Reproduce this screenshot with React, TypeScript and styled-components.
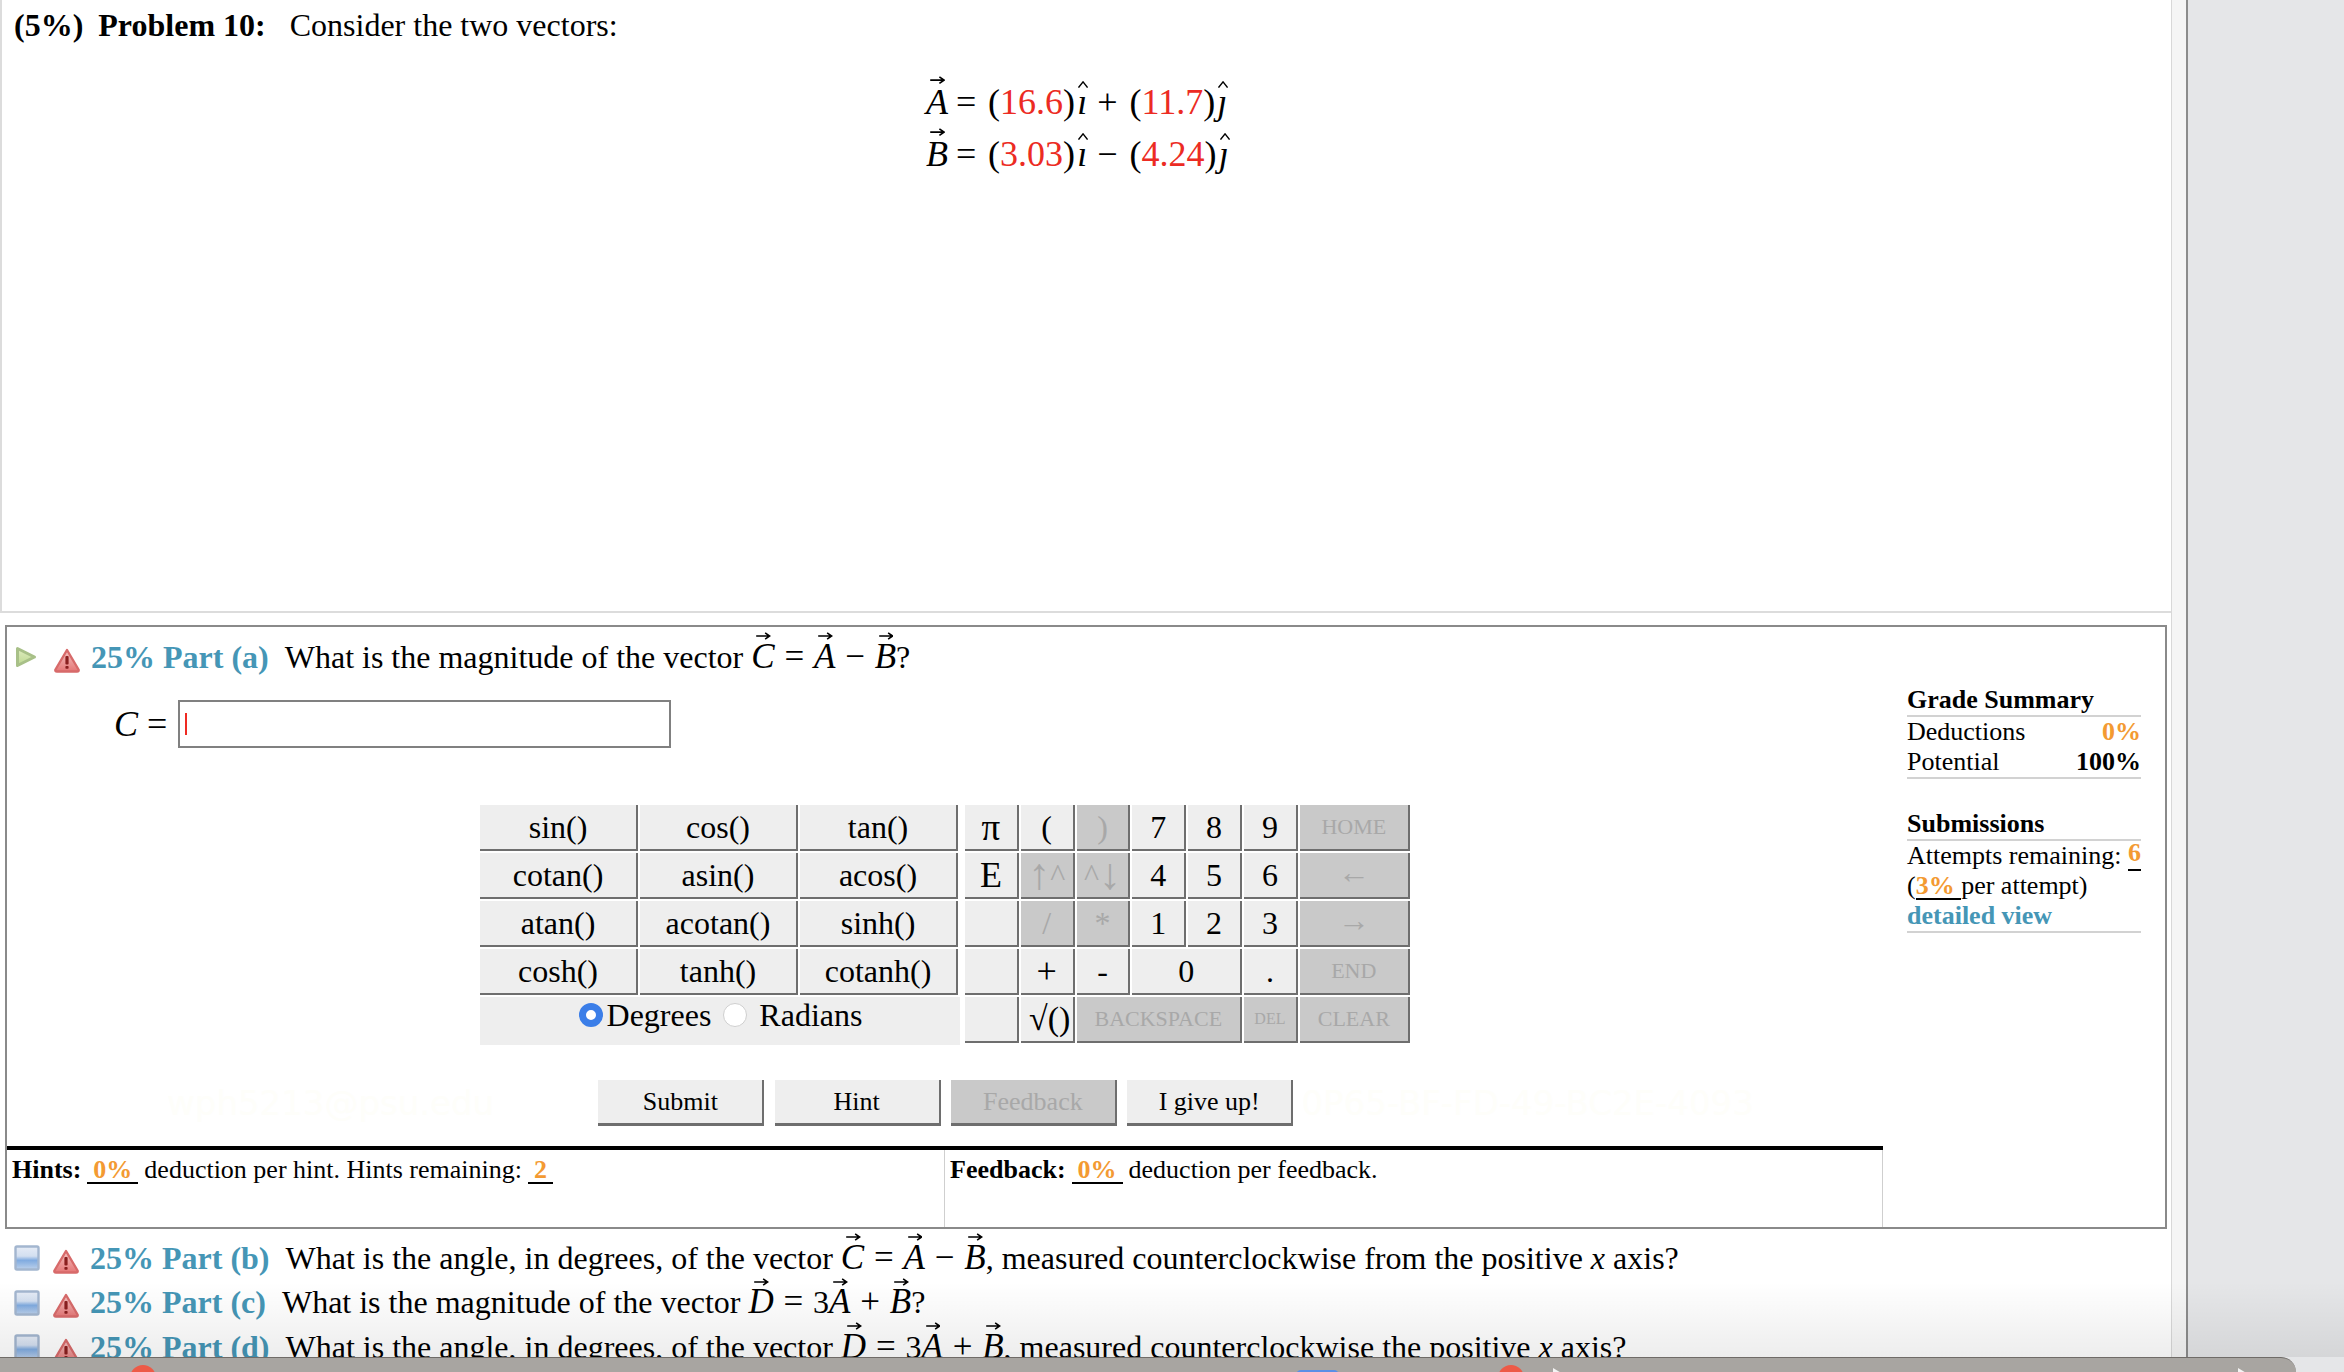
import { FC, ReactNode } from "react";
import styled, { createGlobalStyle } from "styled-components";

const BLUE = "#4596b6";
const ORANGE = "#f39a32";
const SERIF = '"Liberation Serif", "Times New Roman", serif';

const GlobalStyle = createGlobalStyle`
  html, body {
    margin: 0;
    padding: 0;
    background: #fff;
  }
  body {
    font-family: ${SERIF};
    color: #000;
  }
  * {
    box-sizing: border-box;
  }
`;

const BigArrow = styled.span`
  font-size: 44px;
  line-height: 1;
`;

const SideArrow = styled.span`
  margin-bottom: 6px;
`;

const SqrtLabel = styled.span`
  margin-left: 6px;
`;

const FUNCTION_ROWS = [
  ["sin()", "cos()", "tan()"],
  ["cotan()", "asin()", "acos()"],
  ["atan()", "acotan()", "sinh()"],
  ["cosh()", "tanh()", "cotanh()"],
];

interface Key {
  label: ReactNode;
  off?: boolean;
  span?: number;
  size?: number;
}

const KEY_ROWS: Key[][] = [
  [
    { label: "π", size: 37 },
    { label: "(" },
    { label: ")", off: true },
    { label: "7" },
    { label: "8" },
    { label: "9" },
    { label: "HOME", off: true, size: 22 },
  ],
  [
    { label: "E", size: 36 },
    { label: <><BigArrow>↑</BigArrow>^</>, off: true },
    { label: <>^<BigArrow>↓</BigArrow></>, off: true },
    { label: "4" },
    { label: "5" },
    { label: "6" },
    { label: <SideArrow>←</SideArrow>, off: true, size: 32 },
  ],
  [
    { label: "" },
    { label: "/", off: true },
    { label: "*", off: true },
    { label: "1" },
    { label: "2" },
    { label: "3" },
    { label: <SideArrow>→</SideArrow>, off: true, size: 32 },
  ],
  [
    { label: "" },
    { label: "+", size: 36 },
    { label: "-" },
    { label: "0", span: 2 },
    { label: "." },
    { label: "END", off: true, size: 22 },
  ],
  [
    { label: "" },
    { label: <SqrtLabel>√()</SqrtLabel>, size: 34 },
    { label: "BACKSPACE", off: true, span: 3, size: 22 },
    { label: "DEL", off: true, size: 16 },
    { label: "CLEAR", off: true, size: 22 },
  ],
];

const PlayIcon = () => (
  <svg width="22" height="22" viewBox="0 0 22 22">
    <defs>
      <linearGradient id="playFill" x1="0" y1="0" x2="0" y2="1">
        <stop offset="0" stopColor="#dfecc0" />
        <stop offset="1" stopColor="#bcd890" />
      </linearGradient>
    </defs>
    <path d="M2.5 2.5 L19.5 11 L2.5 19.5 Z" fill="url(#playFill)" stroke="#a8c088" strokeWidth="3" strokeLinejoin="round" />
  </svg>
);

const WarnIcon = () => (
  <svg width="26" height="25" viewBox="0 0 26 25">
    <defs>
      <linearGradient id="warnFill" x1="0" y1="0" x2="0" y2="1">
        <stop offset="0" stopColor="#f3c4c2" />
        <stop offset="1" stopColor="#e57676" />
      </linearGradient>
    </defs>
    <path d="M13 2 L24.5 21.5 Q25.2 23.5 23 23.5 L3 23.5 Q0.8 23.5 1.5 21.5 Z" fill="url(#warnFill)" stroke="#d76a6a" strokeWidth="2.4" strokeLinejoin="round" />
    <rect x="11.4" y="8" width="3.2" height="8.5" rx="1" fill="#8a1f1f" />
    <rect x="11.4" y="18" width="3.2" height="2.8" rx="0.8" fill="#8a1f1f" />
  </svg>
);

const BoxIcon = () => (
  <svg width="26" height="26" viewBox="0 0 26 26">
    <defs>
      <linearGradient id="boxFill" x1="0" y1="0" x2="0" y2="1">
        <stop offset="0" stopColor="#e6ecf6" />
        <stop offset="0.42" stopColor="#d3dff0" />
        <stop offset="0.6" stopColor="#80abe0" />
        <stop offset="1" stopColor="#bdd1eb" />
      </linearGradient>
    </defs>
    <rect x="1.5" y="1.5" width="23" height="23" rx="1.5" fill="url(#boxFill)" stroke="#a3b6cf" strokeWidth="2.4" />
  </svg>
);

// Letter with a small arrow sitting above it
const Vec: FC<{ children: ReactNode }> = ({ children }) => (
  <VecWrap>
    <VecArrow viewBox="0 0 16 9">
      <path d="M0 4.5 H14 M10 1 L15 4.5 L10 8" fill="none" stroke="#000" strokeWidth="1.8" />
    </VecArrow>
    <i>{children}</i>
  </VecWrap>
);

const Hat: FC<{ children: ReactNode }> = ({ children }) => (
  <HatWrap>
    <HatMark viewBox="0 0 10 7">
      <path d="M0.5 6.5 L5 0.8 L9.5 6.5" fill="none" stroke="#000" strokeWidth="1.4" />
    </HatMark>
    <i>{children}</i>
  </HatWrap>
);

const PartRow: FC<{ letter: string; children: ReactNode; icon?: ReactNode }> = ({
  letter,
  children,
  icon,
}) => (
  <PartLine>
    <IconSlot>{icon ?? <BoxIcon />}</IconSlot>
    <WarnSlot>
      <WarnIcon />
    </WarnSlot>
    <PartLabel>25% Part ({letter})</PartLabel>
    <PartText>{children}</PartText>
  </PartLine>
);

const App = () => (
  <>
    <GlobalStyle />
    <Page>
      <Main>
        <ProblemBox>
          <Heading>
            <b>(5%)</b>
            <b>Problem 10:</b>
            <Intro>Consider the two vectors:</Intro>
          </Heading>
          <Equations>
            <Equation>
              <Vec>A</Vec>
              <Op>=</Op>(<Given>16.6</Given>)<Hat>ı</Hat>
              <Op>+</Op>(<Given>11.7</Given>)<Hat>ȷ</Hat>
            </Equation>
            <Equation>
              <Vec>B</Vec>
              <Op>=</Op>(<Given>3.03</Given>)<Hat>ı</Hat>
              <Op>−</Op>(<Given>4.24</Given>)<Hat>ȷ</Hat>
            </Equation>
          </Equations>
        </ProblemBox>

        <PartBox>
          <PartHead>
            <PartRow letter="a" icon={<PlayIcon />}>
              What is the magnitude of the vector <Vec>C</Vec>
              <Op>=</Op>
              <Vec>A</Vec>
              <Op>−</Op>
              <Vec>B</Vec>?
            </PartRow>
          </PartHead>

          <PartBody>
            <WorkArea>
              <AnswerRow>
                <AnswerLabel>
                  <i>C</i> =
                </AnswerLabel>
                <AnswerBox>
                  <Caret />
                </AnswerBox>
              </AnswerRow>

              <Calculator>
                <FunctionPad>
                  <FunctionGrid>
                    {FUNCTION_ROWS.flat().map((label) => (
                      <PadKey key={label}>{label}</PadKey>
                    ))}
                  </FunctionGrid>
                  <AngleRow>
                    <RadioOn />
                    <span>Degrees</span>
                    <RadioOff />
                    <span>Radians</span>
                  </AngleRow>
                </FunctionPad>

                <NumberGrid>
                  {KEY_ROWS.flat().map((k, i) => (
                    <PadKey key={i} $off={k.off} $span={k.span} $size={k.size}>
                      {k.label}
                    </PadKey>
                  ))}
                </NumberGrid>
              </Calculator>

              <ActionRow>
                <Watermark $left>wph5213@psu.edu</Watermark>
                <ActionButton>Submit</ActionButton>
                <ActionButton>Hint</ActionButton>
                <ActionButton $off>Feedback</ActionButton>
                <ActionButton>I give up!</ActionButton>
                <Watermark>0P65-BF-FD-49-BC2E-4093</Watermark>
              </ActionRow>
            </WorkArea>

            <SideColumn>
              <SummaryBlock>
                <SummaryTitle>Grade Summary</SummaryTitle>
                <SummaryRow>
                  <span>Deductions</span>
                  <Orange>0%</Orange>
                </SummaryRow>
                <SummaryRow>
                  <span>Potential</span>
                  <b>100%</b>
                </SummaryRow>
              </SummaryBlock>
              <SummaryBlock>
                <SummaryTitle>Submissions</SummaryTitle>
                <SummaryRow>
                  <span>Attempts remaining:</span>
                  <Underlined>
                    <Orange>6</Orange>
                  </Underlined>
                </SummaryRow>
                <SummaryLine>
                  (
                  <Underlined>
                    <Orange>3%</Orange>&nbsp;
                  </Underlined>
                  per attempt)
                </SummaryLine>
                <DetailLink>detailed view</DetailLink>
              </SummaryBlock>
            </SideColumn>
          </PartBody>

          <HintStrip>
            <HintCell>
              <b>Hints:</b>
              <Underlined $wide>
                <Orange>0%</Orange>
              </Underlined>
              deduction per hint. Hints remaining:
              <Underlined $wide>
                <Orange>2</Orange>
              </Underlined>
            </HintCell>
            <HintCell $last>
              <b>Feedback:</b>
              <Underlined $wide>
                <Orange>0%</Orange>
              </Underlined>
              deduction per feedback.
            </HintCell>
          </HintStrip>
        </PartBox>

        <OtherParts>
          <PartRow letter="b">
            What is the angle, in degrees, of the vector <Vec>C</Vec>
            <Op>=</Op>
            <Vec>A</Vec>
            <Op>−</Op>
            <Vec>B</Vec>, measured counterclockwise from the positive <i>x</i> axis?
          </PartRow>
          <PartRow letter="c">
            What is the magnitude of the vector <Vec>D</Vec>
            <Op>=</Op>3<Vec>A</Vec>
            <Op>+</Op>
            <Vec>B</Vec>?
          </PartRow>
          <PartRow letter="d">
            What is the angle, in degrees, of the vector <Vec>D</Vec>
            <Op>=</Op>3<Vec>A</Vec>
            <Op>+</Op>
            <Vec>B</Vec>, measured counterclockwise the positive <i>x</i> axis?
          </PartRow>
        </OtherParts>
      </Main>
      <Gutter />
      <DockShade />
      <Dock>
        <DockDot $left={130} $color="#ed5a47" />
        <DockDot $left={1498} $color="#ed5a47" />
        <DockBlue />
        <DockMark $left={1553} />
        <DockMark $left={2238} />
      </Dock>
    </Page>
  </>
);

export default App;

const Page = styled.div`
  position: relative;
  display: flex;
  width: 2344px;
  height: 1372px;
  overflow: hidden;
  background: #fff;
`;

const Main = styled.div`
  width: 2172px;
  height: 100%;
  flex: none;
  border-right: 1px solid #d8d8d8;
`;

const Gutter = styled.div`
  flex: 1;
  background: #e5e6e8;
  border-left: 14px solid #f5f5f5;
  box-shadow: inset 2px 0 0 #8c8c8c;
`;

const ProblemBox = styled.div`
  height: 613px;
  border-left: 2px solid #dcdcdc;
  border-bottom: 2px solid #dcdcdc;
  padding: 6px 0 0 12px;
`;

const Heading = styled.div`
  display: flex;
  gap: 15px;
  font-size: 32px;
  line-height: 38px;
`;

const Intro = styled.span`
  margin-left: 9px;
`;

const Op = styled.span`
  display: inline-block;
  margin: 0 0.28em;
`;

const Equations = styled.div`
  margin: 32px 0 0 912px;
  font-size: 36px;
`;

const Equation = styled.div`
  height: 52px;
  line-height: 52px;
  white-space: nowrap;

  ${Op} {
    margin: 0 0.33em 0 0.22em;
  }
`;

const Given = styled.span`
  color: #ec2b23;
`;

const VecWrap = styled.span`
  position: relative;
  display: inline-block;
  line-height: 1.15;
`;

const VecArrow = styled.svg`
  position: absolute;
  left: 50%;
  top: -0.18em;
  width: 0.42em;
  height: 0.23em;
  margin-left: -0.19em;
`;

const HatWrap = styled.span`
  position: relative;
  display: inline-block;
  line-height: 1.15;
  margin: 0 0.06em;
`;

const HatMark = styled.svg`
  position: absolute;
  left: 50%;
  top: -0.03em;
  width: 0.28em;
  height: 0.2em;
  margin-left: -0.11em;
`;

const PartBox = styled.div`
  width: 2162px;
  height: 604px;
  margin: 12px 0 0 5px;
  border: 2px solid #8a8a8a;
  display: flex;
  flex-direction: column;
`;

const PartHead = styled.div`
  height: 58px;
  padding: 8px 0 0 8px;
`;

const PartLine = styled.div`
  display: flex;
  align-items: center;
  height: 44.5px;
  white-space: nowrap;
  font-size: 32px;
`;

const IconSlot = styled.span`
  display: flex;
  width: 39px;
  flex: none;
`;

const WarnSlot = styled.span`
  display: flex;
  width: 37px;
  flex: none;
  padding-top: 6px;
`;

const PartLabel = styled.b`
  color: ${BLUE};
  margin-right: 16px;
`;

const PartText = styled.span`
  ${VecWrap}, ${Op} {
    font-size: 35px;
    line-height: 1;
  }
`;

const PartBody = styled.div`
  display: flex;
  flex: 1;
`;

const WorkArea = styled.div`
  width: 1876px;
  flex: none;
  border-bottom: 4px solid #000;
`;

const AnswerRow = styled.div`
  display: flex;
  align-items: center;
  padding-left: 107px;
  height: 48px;
  margin-top: 15px;
`;

const AnswerLabel = styled.span`
  font-size: 36px;
  width: 64px;
`;

const AnswerBox = styled.div`
  display: flex;
  align-items: center;
  width: 493px;
  height: 48px;
  border: 2px solid #808080;
  padding-left: 5px;
`;

const Caret = styled.span`
  width: 2px;
  height: 22px;
  background: #ef2a22;
`;

const Calculator = styled.div`
  display: flex;
  gap: 5px;
  margin: 57px 0 0 473px;
`;

const FunctionPad = styled.div`
  width: 480px;
  background: #eeeeee;
`;

const FunctionGrid = styled.div`
  display: grid;
  grid-template-columns: repeat(3, 158px);
  grid-auto-rows: 46px;
  gap: 2px;
  background: #fff;
  padding-bottom: 2px;
`;

const AngleRow = styled.div`
  display: flex;
  align-items: center;
  justify-content: center;
  gap: 4px;
  height: 48px;
  padding: 0 0 12px 1px;
  font-size: 32px;
`;

const RadioOn = styled.span`
  width: 24px;
  height: 24px;
  border-radius: 50%;
  border: 7px solid #3b7ee8;
  background: #fff;
`;

const RadioOff = styled.span`
  width: 24px;
  height: 24px;
  margin: 0 8px 0 8px;
  border-radius: 50%;
  border: 1px solid #cfcfcf;
  background: #fff;
`;

const NumberGrid = styled.div`
  display: grid;
  grid-template-columns: repeat(6, 53.8px) 110px;
  grid-auto-rows: 46px;
  gap: 2px;
`;

const PadKey = styled.div<{ $off?: boolean; $span?: number; $size?: number }>`
  display: flex;
  align-items: center;
  justify-content: center;
  grid-column: span ${({ $span }) => $span ?? 1};
  background: ${({ $off }) => ($off ? "#c9c9c9" : "#eeeeee")};
  color: ${({ $off }) => ($off ? "#a8a8a8" : "#000")};
  font-size: ${({ $size }) => $size ?? 32}px;
  border-right: 2px solid #6e6e6e;
  border-bottom: 2px solid #6e6e6e;
  white-space: nowrap;
`;

const ActionRow = styled.div`
  display: flex;
  gap: 10.3px;
  margin-top: 35px;
`;

const ActionButton = styled.div<{ $off?: boolean }>`
  display: flex;
  align-items: center;
  justify-content: center;
  width: 166px;
  height: 46px;
  flex: none;
  font-size: 26px;
  background: ${({ $off }) => ($off ? "#c9c9c9" : "#eeeeee")};
  color: ${({ $off }) => ($off ? "#a8a8a8" : "#000")};
  border-right: 2px solid #6e6e6e;
  border-bottom: 3px solid #6e6e6e;
`;

// near-white text that runs beside the buttons
const Watermark = styled.div<{ $left?: boolean }>`
  width: ${({ $left }) => ($left ? "581px" : "auto")};
  padding-left: ${({ $left }) => ($left ? "160px" : "0")};
  margin-left: ${({ $left }) => ($left ? "0" : "-2px")};
  flex: none;
  font-family: "DejaVu Sans", sans-serif;
  font-size: 34px;
  line-height: 46px;
  color: #fefefa;
  white-space: nowrap;
`;

const SideColumn = styled.div`
  width: 234px;
  margin-left: 24px;
  font-size: 26px;
`;

const SummaryBlock = styled.div`
  margin-bottom: 30px;
  border-bottom: 2px solid #d2d2d2;
`;

const SummaryTitle = styled.div`
  font-weight: bold;
  line-height: 30px;
  border-bottom: 2px solid #d2d2d2;
`;

const SummaryRow = styled.div`
  display: flex;
  justify-content: space-between;
  line-height: 30px;
  white-space: nowrap;
`;

const SummaryLine = styled.div`
  line-height: 30px;
  white-space: nowrap;
`;

const Orange = styled.b`
  color: ${ORANGE};
`;

const Underlined = styled.span<{ $wide?: boolean }>`
  display: inline-block;
  line-height: 24px;
  border-bottom: 2px solid #000;
  ${({ $wide }) => $wide && "padding: 0 6px; margin: 0 6px;"}
`;

const DetailLink = styled.div`
  color: ${BLUE};
  font-weight: bold;
  line-height: 30px;
`;

const HintStrip = styled.div`
  display: flex;
  width: 1876px;
  flex: none;
  height: 77px;
`;

const HintCell = styled.div<{ $last?: boolean }>`
  flex: ${({ $last }) => ($last ? 1 : "none")};
  width: ${({ $last }) => ($last ? "auto" : "938px")};
  padding: 5px 0 0 5px;
  font-size: 26px;
  line-height: 30px;
  border-right: 1px solid #cfcfcf;
  white-space: nowrap;
`;

const OtherParts = styled.div`
  padding: 7px 0 0 14px;
`;

const DockShade = styled.div`
  position: absolute;
  left: 0;
  right: 0;
  bottom: 15px;
  height: 75px;
  background: linear-gradient(rgba(0, 0, 0, 0), rgba(0, 0, 0, 0.07));
  pointer-events: none;
`;

const Dock = styled.div`
  position: absolute;
  left: 0;
  right: 48px;
  bottom: 0;
  height: 15px;
  overflow: hidden;
  background: #a8a5a1;
  border-top: 1px solid #6f6b67;
  border-top-right-radius: 18px;
`;

const DockDot = styled.span<{ $left: number; $color: string }>`
  position: absolute;
  left: ${({ $left }) => $left}px;
  top: 7px;
  width: 26px;
  height: 26px;
  border-radius: 50%;
  background: ${({ $color }) => $color};
`;

const DockBlue = styled.span`
  position: absolute;
  left: 1296px;
  top: 12px;
  width: 43px;
  height: 12px;
  border-radius: 5px;
  background: #5b8fe6;
`;

const DockMark = styled.span<{ $left: number }>`
  position: absolute;
  left: ${({ $left }) => $left}px;
  top: 10px;
  width: 12px;
  height: 12px;
  background: #f4f4f4;
  clip-path: polygon(0 0, 100% 60%, 0 100%);
`;
